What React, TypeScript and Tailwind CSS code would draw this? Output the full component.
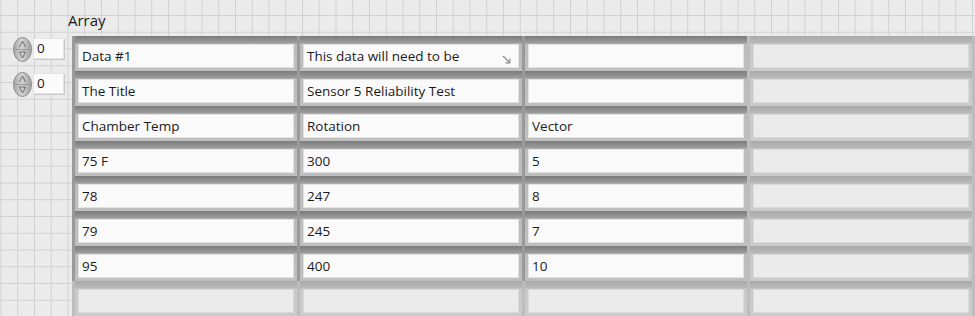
import React from "react";

type CellData = { text?: string; empty?: boolean; more?: boolean };

const rows: CellData[][] = [
  [{ text: "Data #1" }, { text: "This data will need to be", more: true }, { text: "" }, { empty: true }],
  [{ text: "The Title" }, { text: "Sensor 5 Reliability Test" }, { text: "" }, { empty: true }],
  [{ text: "Chamber Temp" }, { text: "Rotation" }, { text: "Vector" }, { empty: true }],
  [{ text: "75 F" }, { text: "300" }, { text: "5" }, { empty: true }],
  [{ text: "78" }, { text: "247" }, { text: "8" }, { empty: true }],
  [{ text: "79" }, { text: "245" }, { text: "7" }, { empty: true }],
  [{ text: "95" }, { text: "400" }, { text: "10" }, { empty: true }],
  [{ empty: true }, { empty: true }, { empty: true }, { empty: true }],
];

function MoreArrow() {
  return (
    <svg width="9" height="9" viewBox="0 0 9 9" className="absolute right-[7px] bottom-[3px]">
      <path d="M1 1 L7.5 7.5" stroke="#8a8a8a" strokeWidth="1.2" fill="none" />
      <path d="M3.5 7.8 L7.8 7.8 L7.8 3.5" stroke="#8a8a8a" strokeWidth="1.2" fill="none" />
    </svg>
  );
}

function Cell({ cell }: { cell: CellData }) {
  if (cell.empty) {
    return (
      <div className="pl-[6px] pr-[3px] pt-[8px] pb-[3px] bg-[linear-gradient(to_bottom,#a9a9a9_0px,#b9b9b9_7px,#c9c9c9_8px,#cbcbcb_100%)] shadow-[inset_3px_0_0_#bdbdbd]">
        <div className="h-[24px] bg-[#ebebeb] border border-[#dadada]" />
      </div>
    );
  }
  return (
    <div className="pl-[6px] pr-[3px] pt-[8px] pb-[3px] bg-[linear-gradient(to_bottom,#7b7b7b_0px,#9d9d9d_7px,#bcbcbc_8px,#bfbfbf_100%)] shadow-[inset_3px_0_0_#9a9a9a]">
      <div className="relative h-[24px] bg-[#fafafa] border border-[#e2e2e2] pl-[3px] leading-[22px] whitespace-nowrap overflow-hidden">
        {cell.text}
        {cell.more ? <MoreArrow /> : null}
      </div>
    </div>
  );
}

function Spinner() {
  return (
    <svg width="21" height="25" viewBox="0 0 21 25">
      <defs>
        <linearGradient id="spinFill" x1="0" y1="0" x2="1" y2="0">
          <stop offset="0" stopColor="#a5a5a5" />
          <stop offset="0.45" stopColor="#d4d4d4" />
          <stop offset="1" stopColor="#a0a0a0" />
        </linearGradient>
      </defs>
      <ellipse cx="10.5" cy="12.5" rx="9" ry="12" fill="url(#spinFill)" stroke="#8d8d8d" strokeWidth="1" />
      <path d="M2.5 12.5 H18.5" stroke="#9a9a9a" strokeWidth="1" />
      <path d="M10.5 4 L7.5 10 M10.5 4 L13.5 10" stroke="#6e6e6e" strokeWidth="1" fill="none" />
      <path d="M10.5 21 L7.5 15 M10.5 21 L13.5 15 M7.5 15 H13.5" stroke="#6e6e6e" strokeWidth="1" fill="none" />
    </svg>
  );
}

function IndexControl() {
  return (
    <div className="flex items-start h-[25px]">
      <Spinner />
      <div className="mt-[1px] w-[31px] h-[21px] bg-[#fbfbfb] border border-[#e4e4e4] shadow-[1px_1px_0_#c9c9c9] pl-[3px] leading-[19px] text-[13.5px]">
        0
      </div>
    </div>
  );
}

export default function App() {
  return (
    <div className="w-[975px] h-[316px] overflow-hidden bg-[#ebebeb] [background-image:linear-gradient(to_right,#d1d1d1_1px,transparent_1px),linear-gradient(to_bottom,#d1d1d1_1px,transparent_1px)] [background-size:16.75px_16.75px] [background-position:0.5px_15px] font-['Open_Sans','Noto_Sans',sans-serif] text-[13.5px] text-[#1a1a1a]">
      <div className="h-[36px] pl-[68px] pt-[11px] text-[15px] leading-[19px]">Array</div>
      <div className="flex">
        <div className="w-[72px] pl-[12px] pt-[1px] flex flex-col gap-[10px]">
          <IndexControl />
          <IndexControl />
        </div>
        <div className="grid grid-cols-[repeat(4,225px)] auto-rows-[35px] bg-[#bdbdbd] pr-[3px]">
          {rows.map((r, i) =>
            r.map((c, j) => <Cell key={`${i}-${j}`} cell={c} />)
          )}
        </div>
      </div>
    </div>
  );
}
